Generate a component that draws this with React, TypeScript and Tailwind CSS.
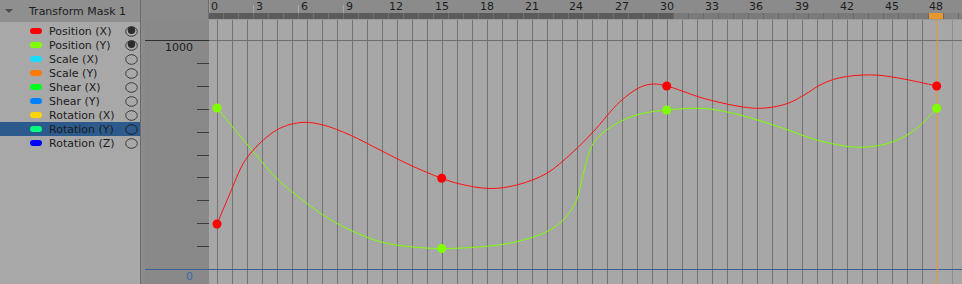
import React from "react";

type Pt = [number, number];

const channels = [
  { name: "Position (X)", color: "bg-[#ff0000]", on: true },
  { name: "Position (Y)", color: "bg-[#80ff00]", on: true },
  { name: "Scale (X)", color: "bg-[#19dcff]", on: false },
  { name: "Scale (Y)", color: "bg-[#ff7a00]", on: false },
  { name: "Shear (X)", color: "bg-[#00ff1e]", on: false },
  { name: "Shear (Y)", color: "bg-[#0080ff]", on: false },
  { name: "Rotation (X)", color: "bg-[#ffd400]", on: false },
  { name: "Rotation (Y)", color: "bg-[#00ff80]", on: false, selected: true },
  { name: "Rotation (Z)", color: "bg-[#0000ff]", on: false },
];

const redPts: Pt[] = [
  [217, 224], [230, 193.3], [243.3, 163.3], [253.3, 150], [263.3, 140], [276.7, 130],
  [290, 124.5], [305, 122.3], [323.3, 125], [350, 135], [380, 150], [410, 165],
  [441.7, 178.3], [460, 184], [490, 188.5], [516.7, 185], [546.7, 173.3], [573.3, 151.7],
  [593.3, 131.7], [620, 101.7], [640, 87.3], [653.3, 84], [666.7, 86], [700, 97.3],
  [720, 102.5], [740, 106.5], [756.7, 108.3], [773.3, 107], [790, 102.5], [805, 94.5],
  [820, 85], [833.3, 79.5], [846.7, 76.5], [863.3, 75], [880, 75.3], [900, 78.3],
  [920, 82.3], [936.7, 86],
];

const greenPts: Pt[] = [
  [217, 108], [253.3, 151.7], [276.7, 178.3], [306.7, 203.3], [336.7, 223.3], [380, 241.7],
  [410, 246.7], [441.7, 248.5], [490, 246], [516.7, 241.7], [546.7, 231.7], [563.3, 220],
  [576.7, 200], [583.3, 173.3], [593.3, 143.3], [606.7, 130], [623.3, 120], [643.3, 113.3],
  [666.7, 110], [690, 108.3], [710, 109], [740, 115], [783.3, 128.3], [816.7, 140], [860, 147.3],
  [893.3, 141.7], [916.7, 128.3], [936.7, 108.3],
];

function dist(a: Pt, b: Pt) {
  return Math.hypot(a[0] - b[0], a[1] - b[1]);
}

// Centripetal Catmull-Rom to cubic Bezier
function toPath(pts: Pt[]): string {
  const n = pts.length;
  let d = `M${pts[0][0]},${pts[0][1]}`;
  for (let i = 0; i < n - 1; i++) {
    const p1 = pts[i];
    const p2 = pts[i + 1];
    const p0: Pt = i > 0 ? pts[i - 1] : [2 * p1[0] - p2[0], 2 * p1[1] - p2[1]];
    const p3: Pt = i + 2 < n ? pts[i + 2] : [2 * p2[0] - p1[0], 2 * p2[1] - p1[1]];
    const d1 = Math.sqrt(dist(p0, p1));
    const d2 = Math.sqrt(dist(p1, p2));
    const d3 = Math.sqrt(dist(p2, p3));
    const a1 = d1 * d1, a2 = d2 * d2, a3 = d3 * d3;
    const c1: Pt = [
      (a1 * p2[0] - a2 * p0[0] + (2 * a1 + 3 * d1 * d2 + a2) * p1[0]) / (3 * d1 * (d1 + d2)),
      (a1 * p2[1] - a2 * p0[1] + (2 * a1 + 3 * d1 * d2 + a2) * p1[1]) / (3 * d1 * (d1 + d2)),
    ];
    const c2: Pt = [
      (a3 * p1[0] - a2 * p3[0] + (2 * a3 + 3 * d3 * d2 + a2) * p2[0]) / (3 * d3 * (d3 + d2)),
      (a3 * p1[1] - a2 * p3[1] + (2 * a3 + 3 * d3 * d2 + a2) * p2[1]) / (3 * d3 * (d3 + d2)),
    ];
    d += ` C${c1[0].toFixed(2)},${c1[1].toFixed(2)} ${c2[0].toFixed(2)},${c2[1].toFixed(2)} ${p2[0]},${p2[1]}`;
  }
  return d;
}

function Eye({ on, dark }: { on: boolean; dark?: boolean }) {
  const c = dark ? "#1d1d1d" : "#3a3a3a";
  return (
    <svg width="13" height="11" viewBox="0 0 13 11" className="mr-[2px] ml-auto shrink-0">
      <ellipse cx="6.5" cy="5.5" rx="5.8" ry="4.8" fill="none" stroke={c} strokeWidth="1" />
      {on && <circle cx="6.5" cy="4.3" r="3.7" fill="#2b2b2b" />}
    </svg>
  );
}

function RulerCell({ f }: { f: number }) {
  const labeled = f % 3 === 0;
  const major = f % 12 === 0;
  return (
    <div className="w-[15px] shrink-0 h-[13px] flex items-stretch">
      {labeled && major && (
        <>
          <div className="w-px bg-[#6a6a6a]" />
          <div className="w-px bg-[#9c9c9c]" />
          <span className="ml-[1px] leading-[13px] whitespace-nowrap">{f}</span>
        </>
      )}
      {labeled && !major && (
        <>
          <div className="w-px h-[8px] self-end bg-[#a9a9a9]" />
          <span className="ml-[2px] leading-[13px] whitespace-nowrap">{f}</span>
        </>
      )}
    </div>
  );
}

function TickCell({ f }: { f: number }) {
  let cls = "bg-[#5b5b5b] border-[#717171]";
  if (f > 30) cls = "bg-[#7a7a7a] border-[#6a6a6a]";
  if (f === 48) cls = "bg-[#e8962e] border-[#6a6a6a]";
  if (f > 48) cls = "bg-[#828282] border-[#6a6a6a]";
  return <div className={`w-[15px] shrink-0 h-[6px] border-l ${cls}`} />;
}

export default function App() {
  const frames = Array.from({ length: 51 }, (_, i) => i);
  const gridFrames = Array.from({ length: 50 }, (_, i) => i);
  const axisTicks = Array.from({ length: 9 }, (_, i) => 40 + 22.9 * (i + 1));

  return (
    <div className="flex w-[962px] h-[284px] overflow-hidden font-['DejaVu_Sans',sans-serif] text-[11px] text-[#1c1c1c] select-none">
      {/* Channel list */}
      <aside className="w-[140px] shrink-0 bg-[#a8a8a8] flex flex-col">
        <div className="h-[22px] bg-[#8f8f8f] flex items-center">
          <svg width="8" height="5" viewBox="0 0 8 5" className="ml-[5px] shrink-0">
            <polygon points="0,0 8,0 4,4" fill="#4d4d4d" />
          </svg>
          <span className="ml-[16px] leading-[13px] whitespace-nowrap">Transform Mask 1</span>
        </div>
        <div className="h-[2px]" />
        {channels.map((c) => (
          <div
            key={c.name}
            className={`h-[14px] flex items-center ${c.selected ? "bg-[#2c5a8c]" : ""}`}
          >
            <div className={`ml-[30px] w-[12px] h-[6px] rounded-full shrink-0 ${c.color}`} />
            <span className="ml-[7px] leading-[13px] whitespace-nowrap">{c.name}</span>
            <Eye on={c.on} dark={c.selected} />
          </div>
        ))}
      </aside>

      {/* Splitter */}
      <div className="w-[5px] shrink-0 border-l border-[#6c6c6c] bg-[#8b8b8b]" />

      {/* Curve editor */}
      <div className="flex-1 flex flex-col min-w-0">
        {/* Ruler */}
        <div className="h-[20px] flex shrink-0 bg-[#8b8b8b]">
          <div className="w-[63px] shrink-0" />
          <div className="flex-1 flex flex-col overflow-hidden">
            <div className="h-[13px] flex">
              {frames.map((f) => (
                <RulerCell key={f} f={f} />
              ))}
            </div>
            <div className="h-[6px] flex">
              {frames.map((f) => (
                <TickCell key={f} f={f} />
              ))}
            </div>
            <div className="h-px bg-[#999999]" />
          </div>
        </div>

        {/* Body */}
        <div className="flex-1 flex min-h-0">
          {/* Value axis */}
          <div className="w-[64px] shrink-0 bg-[#898989] relative flex flex-col">
            <svg
              width="64"
              height="264"
              viewBox="145 20 64 264"
              className="absolute inset-0"
            >
              <line x1="145" x2="209" y1="40.5" y2="40.5" stroke="#2e2e2e" strokeWidth="1" />
              {axisTicks.map((y) => (
                <line
                  key={y}
                  x1="197"
                  x2="209"
                  y1={Math.round(y) + 0.5}
                  y2={Math.round(y) + 0.5}
                  stroke="#3c3c3c"
                  strokeWidth="1"
                />
              ))}
              <line x1="145" x2="209" y1="269.5" y2="269.5" stroke="#3b6090" strokeWidth="1" />
            </svg>
            <div className="h-[21px] shrink-0" />
            <div className="relative text-right pr-[16px] leading-[13px]">1000</div>
            <div className="flex-1" />
            <div className="relative text-right pr-[16px] leading-[13px] text-[#3d6a9e] mb-[1px]">0</div>
          </div>

          {/* Graph */}
          <svg
            width="753"
            height="264"
            viewBox="209 20 753 264"
            className="shrink-0 bg-[#a7a7a7] block"
          >
            {gridFrames.map((f) => (
              <line
                key={f}
                x1={217.5 + 15 * f}
                x2={217.5 + 15 * f}
                y1="20"
                y2="284"
                stroke={f > 48 ? "#8e8e8e" : "#737373"}
                strokeWidth="1"
              />
            ))}
            <line x1="209" x2="962" y1="40.5" y2="40.5" stroke="#6e6e6e" strokeWidth="1" />
            <line x1="209" x2="962" y1="269.5" y2="269.5" stroke="#3b6090" strokeWidth="1" />
            <line x1="937.5" x2="937.5" y1="20" y2="284" stroke="#e8962e" strokeWidth="1" />

            <path d={toPath(greenPts)} fill="none" stroke="#80ff00" strokeWidth="1" />
            <path d={toPath(redPts)} fill="none" stroke="#ff1010" strokeWidth="1" />

            {[
              [217, 108],
              [441.7, 248.5],
              [666.7, 110],
              [936.7, 108.3],
            ].map(([x, y]) => (
              <circle key={`g${x}`} cx={x} cy={y} r="4.5" fill="#7fff00" />
            ))}
            {[
              [217, 224],
              [441.7, 178.3],
              [666.7, 86],
              [936.7, 86],
            ].map(([x, y]) => (
              <circle key={`r${x}`} cx={x} cy={y} r="4.5" fill="#ff0000" />
            ))}
          </svg>
        </div>
      </div>
    </div>
  );
}
